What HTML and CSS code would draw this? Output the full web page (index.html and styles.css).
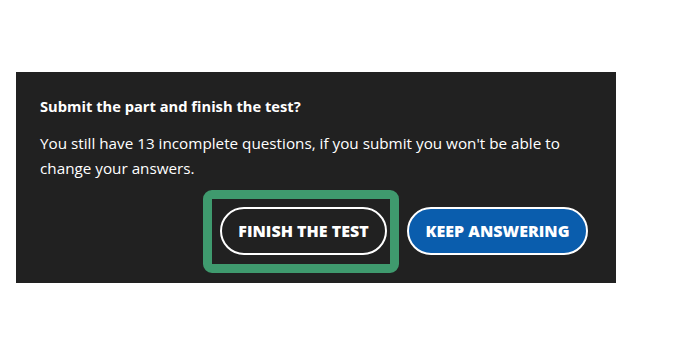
FILE: index.html
```html
<!DOCTYPE html>
<html lang="en">
<head>
<meta charset="utf-8">
<title>Submit</title>
<link rel="stylesheet" href="styles.css">
</head>
<body>
<div class="dialog">
  <h2 class="title">Submit the part and finish the test?</h2>
  <p class="message">You still have 13 incomplete questions, if you submit you won't be able to change your answers.</p>
  <div class="actions">
    <span class="highlight">
      <button class="btn btn-outline" type="button">FINISH THE TEST</button>
    </span>
    <button class="btn btn-primary" type="button">KEEP ANSWERING</button>
  </div>
</div>
</body>
</html>
```
FILE: styles.css
```css
html, body {
  margin: 0;
  padding: 0;
  background: #ffffff;
}
body {
  font-family: "Open Sans", "Lato", sans-serif;
  width: 686px;
  height: 354px;
  overflow: hidden;
}
.dialog {
  margin: 72px 0 0 16px;
  width: 600px;
  height: 211px;
  box-sizing: border-box;
  background: #212121;
  color: #ffffff;
  padding: 24px 28px 0 24px;
}
.title {
  margin: 0;
  font-size: 14.7px;
  font-weight: 700;
  line-height: 20px;
}
.message {
  margin: 15px 0 0;
  font-size: 15.25px;
  line-height: 25px;
  font-weight: 400;
  width: 545px;
}
.actions {
  display: flex;
  justify-content: flex-end;
  gap: 20px;
  margin-top: 26px;
}
.highlight {
  position: relative;
  display: block;
}
.highlight::before {
  content: "";
  position: absolute;
  left: -17px;
  top: -17px;
  width: 196px;
  height: 83px;
  box-sizing: border-box;
  border: 9px solid #3f9a6e;
  border-radius: 9px;
  pointer-events: none;
}
.btn {
  height: 48px;
  border: 2px solid #ffffff;
  border-radius: 24px;
  color: #ffffff;
  font-family: inherit;
  font-size: 16px;
  font-weight: 800;
  padding: 0;
  display: block;
  cursor: pointer;
}
.btn-outline {
  width: 167px;
  background: #212121;
}
.btn-primary {
  width: 181px;
  background: #0a5dad;
}
```
